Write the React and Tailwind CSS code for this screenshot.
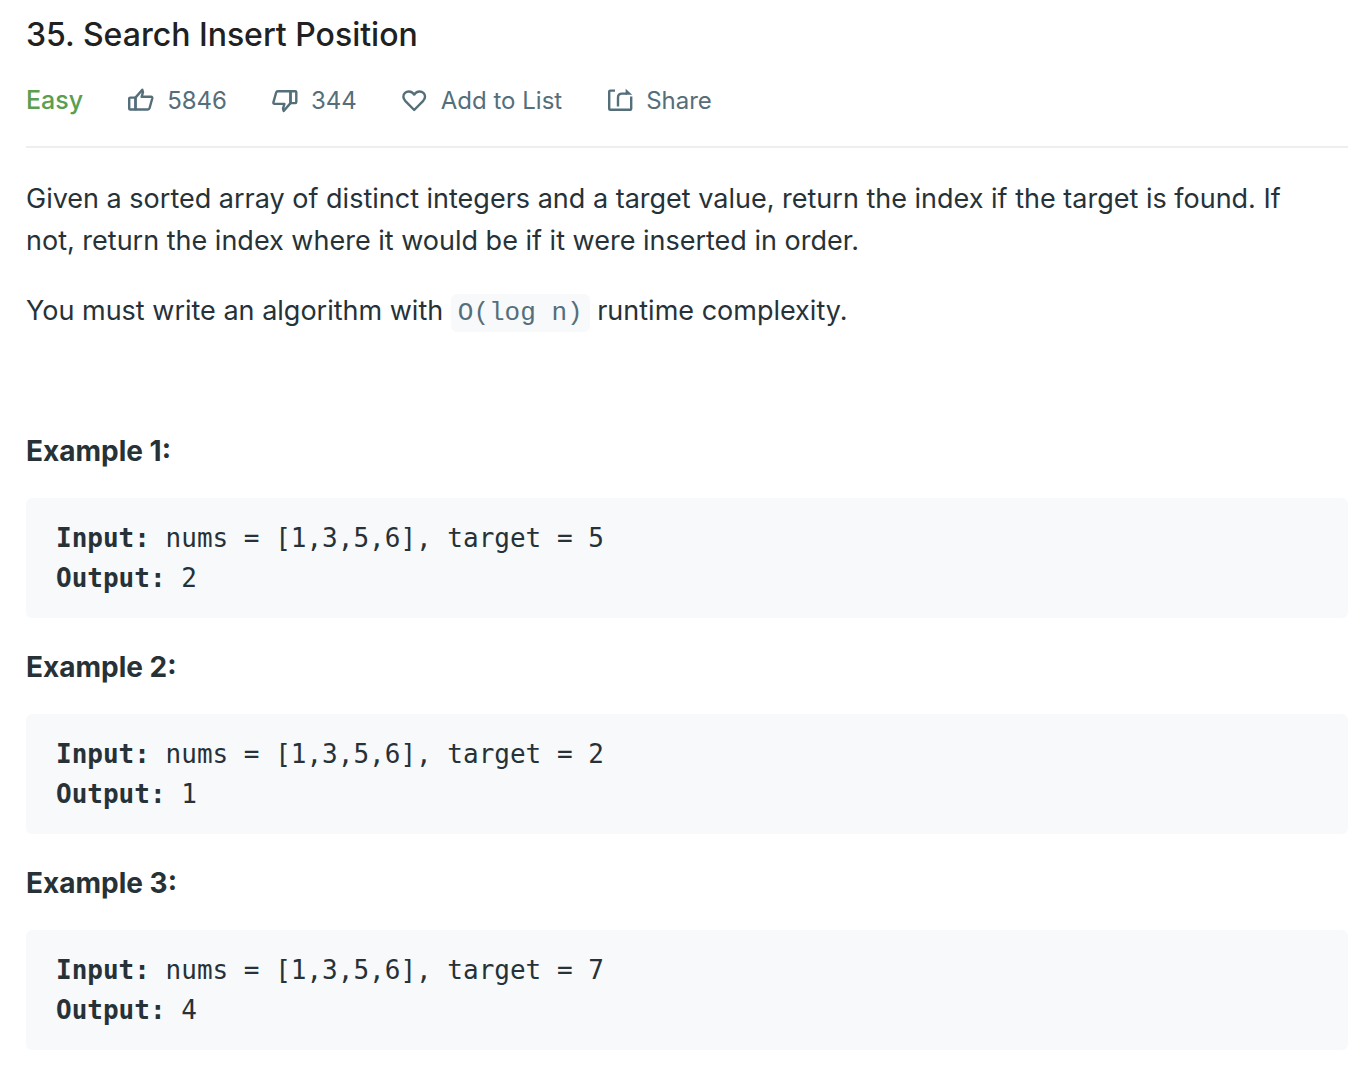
const PROBLEM = {
  id: 35,
  title: 'Search Insert Position',
  difficulty: 'Easy',
  likes: 5846,
  dislikes: 344,
};

const EXAMPLES = [
  { id: 1, input: 'nums = [1,3,5,6], target = 5', output: '2' },
  { id: 2, input: 'nums = [1,3,5,6], target = 2', output: '1' },
  { id: 3, input: 'nums = [1,3,5,6], target = 7', output: '4' },
];

const Icon = ({ children }) => (
  <svg
    viewBox="0 0 26 26"
    className="size-[26px] shrink-0"
    fill="none"
    stroke="currentColor"
    strokeWidth="2.4"
    strokeLinejoin="round"
    aria-hidden="true"
  >
    {children}
  </svg>
);

const LikeIcon = () => (
  <Icon>
    <path d="M7.5 9.6H2.2Q1.2 9.6 1.2 10.6V20.5Q1.2 21.5 2.2 21.5H7.5Z" />
    <path d="M7.5 21.5V9.6L14.3 1.7L15 4.2L13.6 8.8H23Q24.6 8.8 24.3 10.3L21.6 20Q21.2 21.5 19.8 21.5H7.5" />
  </Icon>
);

const DislikeIcon = () => (
  <Icon>
    <path d="M18.5 3.2H23.3Q24.3 3.2 24.3 4.2V14.1Q24.3 15.1 23.3 15.1H18.5Z" />
    <path d="M18.5 3.2V15.1L11.7 23L11 20.7L12.4 15.9H2.7Q1.1 15.9 1.4 14.4L4.1 4.7Q4.5 3.2 5.9 3.2H18.5" />
  </Icon>
);

const HeartIcon = () => (
  <Icon>
    <path d="M12.2 22L3.2 12.8C0.8 10.2 0.8 6.9 3 4.9C5.3 2.8 8.9 3.1 11 5.2L12.2 6.6L13.4 5.2C15.5 3.1 19.1 2.8 21.4 4.9C23.6 6.9 23.6 10.2 21.2 12.8Z" />
  </Icon>
);

const ShareIcon = () => (
  <Icon>
    <path d="M8 2.6H3.2Q2.2 2.6 2.2 3.6V20.8Q2.2 21.8 3.2 21.8H23.2Q24.2 21.8 24.2 20.8V8.6" />
    <path d="M11 18.5V9.5Q11 5.6 15 5.6H20" />
    <path d="M18.6 0.8L25.2 6.8H18.6Z" fill="currentColor" stroke="none" />
  </Icon>
);

const ActionButton = ({ icon, children }) => (
  <button type="button" className="flex cursor-pointer items-center gap-[13px] hover:text-[#263238]">
    {icon}
    {children}
  </button>
);

const Example = ({ id, input, output }) => (
  <section className="mb-7">
    <h2 className="mb-[26px] text-[28px] leading-[42px] font-bold">Example {id}:</h2>
    <pre className="overflow-x-auto rounded-md bg-[#f7f9fa] px-[30px] py-5 font-['DejaVu_Sans_Mono',monospace] text-[26px] leading-[40px]">
      <strong>Input:</strong> {input}{'\n'}
      <strong>Output:</strong> {output}
    </pre>
  </section>
);

export default function App() {
  return (
    <main className="bg-white py-4 pr-4 pl-[26px] font-[Inter,sans-serif] text-[#263238]">
      <header className="border-b-2 border-[#eeeeee] pb-[30px]">
        <h1 className="text-[32px] leading-[38px] font-medium text-[#212121]">
          {PROBLEM.id}. {PROBLEM.title}
        </h1>
        <div className="mt-8 flex items-start gap-[45px] text-2xl leading-[30px] text-[#546e7a]">
          <span className="text-[25px] leading-[28px] font-medium text-[#5a9e4f]">{PROBLEM.difficulty}</span>
          <ActionButton icon={<LikeIcon />}>{PROBLEM.likes}</ActionButton>
          <ActionButton icon={<DislikeIcon />}>{PROBLEM.dislikes}</ActionButton>
          <ActionButton icon={<HeartIcon />}>Add to List</ActionButton>
          <ActionButton icon={<ShareIcon />}>Share</ActionButton>
        </div>
      </header>

      <div className="pt-[30px] text-[27px] leading-[42px]">
        <p className="mb-7 pr-6">
          Given a sorted array of distinct integers and a target value, return the index if the
          target is found. If not, return the index where it would be if it were inserted in order.
        </p>
        <p className="mb-24 pr-6">
          You must write an algorithm with{' '}
          <code className="rounded-md bg-[#f7f9fa] px-[7px] py-1 font-['Liberation_Mono',monospace] text-[26px] text-[#546e7a]">
            O(log n)
          </code>{' '}
          runtime complexity.
        </p>
        {EXAMPLES.map((example) => (
          <Example key={example.id} {...example} />
        ))}
      </div>
    </main>
  );
}
